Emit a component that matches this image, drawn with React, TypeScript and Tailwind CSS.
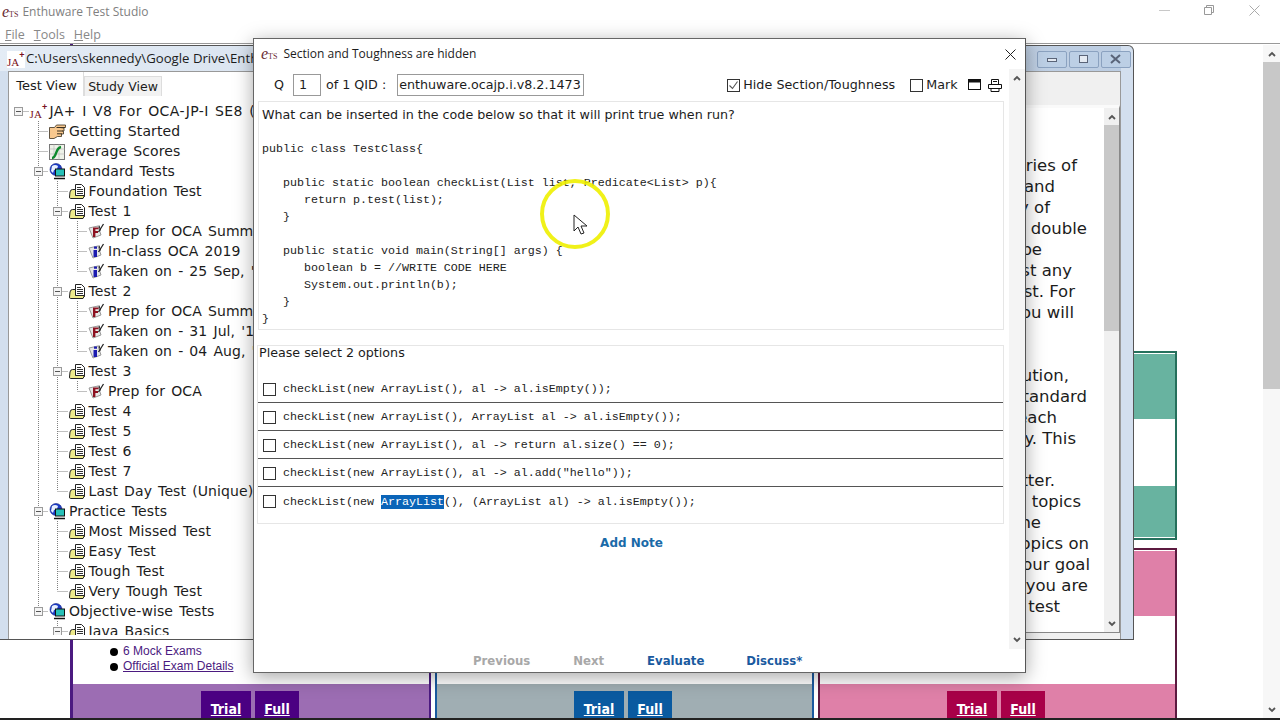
import React from "react";

const SANS = "font-['DejaVu_Sans',Verdana,sans-serif]";
const UI = "font-['Open_Sans','Noto_Sans',sans-serif]";
const MONO = "font-['Liberation_Mono','Courier_New',monospace]";

type Kind = "root" | "hand" | "chart" | "globe" | "folder" | "fail" | "info";
type Row = { d: number; label: string; icon: Kind; exp?: boolean };

const rows: Row[] = [
  { d: 0, label: "JA+ I V8 For OCA-JP-I SE8 (1Z0-808)", icon: "root", exp: true },
  { d: 1, label: "Getting Started", icon: "hand" },
  { d: 1, label: "Average Scores", icon: "chart" },
  { d: 1, label: "Standard Tests", icon: "globe", exp: true },
  { d: 2, label: "Foundation Test", icon: "folder" },
  { d: 2, label: "Test 1", icon: "folder", exp: true },
  { d: 3, label: "Prep for OCA Summer 2019", icon: "fail" },
  { d: 3, label: "In-class OCA 2019", icon: "info" },
  { d: 3, label: "Taken on - 25 Sep, '18", icon: "info" },
  { d: 2, label: "Test 2", icon: "folder", exp: true },
  { d: 3, label: "Prep for OCA Summer 2019", icon: "fail" },
  { d: 3, label: "Taken on - 31 Jul, '19", icon: "fail" },
  { d: 3, label: "Taken on - 04 Aug, '19", icon: "info" },
  { d: 2, label: "Test 3", icon: "folder", exp: true },
  { d: 3, label: "Prep for OCA", icon: "fail" },
  { d: 2, label: "Test 4", icon: "folder" },
  { d: 2, label: "Test 5", icon: "folder" },
  { d: 2, label: "Test 6", icon: "folder" },
  { d: 2, label: "Test 7", icon: "folder" },
  { d: 2, label: "Last Day Test (Unique)", icon: "folder" },
  { d: 1, label: "Practice Tests", icon: "globe", exp: true },
  { d: 2, label: "Most Missed Test", icon: "folder" },
  { d: 2, label: "Easy Test", icon: "folder" },
  { d: 2, label: "Tough Test", icon: "folder" },
  { d: 2, label: "Very Tough Test", icon: "folder" },
  { d: 1, label: "Objective-wise Tests", icon: "globe", exp: true },
  { d: 2, label: "Java Basics", icon: "folder", exp: true },
];

function laterAtDepth(i: number, depth: number) {
  for (let j = i + 1; j < rows.length; j++) {
    if (rows[j].d < depth) return false;
    if (rows[j].d === depth) return true;
  }
  return false;
}

function GuideCell({ vertical }: { vertical: boolean }) {
  return (
    <svg width="19.5" height="20" className="shrink-0">
      {vertical && <line x1="9.5" y1="0" x2="9.5" y2="20" stroke="#808080" strokeDasharray="1 1" />}
    </svg>
  );
}

function ConnectorCell({ d, more, exp }: { d: number; more: boolean; exp?: boolean }) {
  return (
    <svg width="19.5" height="20" className="shrink-0">
      {d > 0 && <line x1="9.5" y1="0" x2="9.5" y2={more ? 20 : 10} stroke="#808080" strokeDasharray="1 1" />}
      <line x1="9.5" y1="10.5" x2="20" y2="10.5" stroke="#808080" strokeDasharray="1 1" />
      {exp && (
        <g>
          <rect x="5.5" y="6.5" width="8" height="8" fill="#f4f4f4" stroke="#9a9a9a" />
          <line x1="7" y1="10.5" x2="12" y2="10.5" stroke="#555" />
        </g>
      )}
    </svg>
  );
}

function FolderIcon() {
  return (
    <svg width="17" height="17" viewBox="0 0 17 17" className="shrink-0">
      <path d="M6.500 1.500h6l3 3v9h-9z" fill="#fff" stroke="#222" />
      <path d="M8 4.500h4M8 6.500h6M8 8.500h6M8 10.500h6" stroke="#333" />
      <path d="M1.500 15.500Q.5 15.500.5 14l.5-5Q1.500 6.500 3.500 6.500H6.500V12.500H15.500L14 15.500Z" fill="#eeea8c" stroke="#222" />
    </svg>
  );
}

function ResultIcon({ fail }: { fail: boolean }) {
  return (
    <svg width="17" height="17" viewBox="0 0 17 17" className="shrink-0">
      <path d="M1 5l9-2 3 9-8 3z" fill="#e8e8e8" stroke="#999" />
      {fail ? (
        <path d="M5 4.500h5.500v1.800H7.400v1.800H10v1.800H7.400V14H5z" fill="#8c1020" />
      ) : (
        <path d="M6 3.500h3v2.200H6zM5.500 7h3.500v7H5.500z" fill="#1c1cb0" />
      )}
      <path d="M10.500 9l5-8" stroke="#222" strokeWidth="1.300" />
      <path d="M11 2.500l1.500 5" stroke="#222" />
    </svg>
  );
}

function TreeIcon({ kind }: { kind: Kind }) {
  if (kind === "folder") return <FolderIcon />;
  if (kind === "fail") return <ResultIcon fail />;
  if (kind === "info") return <ResultIcon fail={false} />;
  if (kind === "root") return <JaLogo />;
  if (kind === "hand")
    return (
      <svg width="17" height="17" viewBox="0 0 17 17" className="shrink-0">
        <path d="M.5 4.500h5l2-2.500h9v2.500H11l4 .5v3h-1.500l1 .5v2.500h-2v2.500H8.500L5 15.500H.5z" fill="#f8c88e" stroke="#3a3020" strokeWidth=".8" />
        <path d="M7.500 4.500h8.500M8 8h6M8 10.800h5" stroke="#3a3020" strokeWidth="1" />
      </svg>
    );
  if (kind === "chart")
    return (
      <svg width="17" height="17" viewBox="0 0 17 17" className="shrink-0">
        <rect x=".5" y="1.500" width="15" height="15" fill="#eef2e8" stroke="#777" />
        <path d="M.5 6h15M.5 11h15M5 1.500v15M10 1.500v15" stroke="#bbb" strokeWidth=".7" />
        <path d="M3 15c5 0 3-10 9-11" stroke="#0c8a2c" strokeWidth="2.400" fill="none" />
      </svg>
    );
  return (
    <svg width="17" height="17" viewBox="0 0 17 17" className="shrink-0">
      <circle cx="7" cy="6.500" r="6" fill="#1c3cc8" stroke="#102080" strokeWidth=".6" />
      <path d="M3 3q3-2 6 0l-1 3-3 1-1 3-2-2z" fill="#e8f0ff" />
      <rect x="6.500" y="6" width="9" height="7" fill="#27c0b8" stroke="#111" />
      <path d="M5 15.500h11" stroke="#111" strokeWidth="1.500" />
    </svg>
  );
}

function JaLogo() {
  return (
    <span className="w-[18px] h-[17px] shrink-0 flex items-start leading-none text-[#7a1020]">
      <span className="mt-[6px] text-[11px] font-['Liberation_Serif',serif]">JA</span>
      <span className="text-[9px] font-['Liberation_Sans',sans-serif] font-bold">+</span>
    </span>
  );
}

function EtsLogo() {
  return (
    <span className="text-[#6a2a32] font-['Liberation_Serif',serif] leading-none shrink-0 whitespace-nowrap block">
      <span className="italic text-[16px]">e</span>
      <span className="text-[8px]">TS</span>
    </span>
  );
}

function Tree() {
  return (
    <div className={`flex flex-col ${SANS} text-[14px] text-[#1c1c1c] tracking-[0.1px] [word-spacing:1.5px]`}>
      {rows.map((r, i) => {
        const guides: number[] = [];
        for (let k = 1; k < r.d; k++) guides.push(k);
        return (
          <div key={i} className="flex items-center h-[20px] whitespace-nowrap">
            {r.d > 0 && <GuideCell vertical={false} />}
            {guides.map((k) => (
              <GuideCell key={k} vertical={laterAtDepth(i, k)} />
            ))}
            <ConnectorCell d={r.d} more={laterAtDepth(i, r.d)} exp={r.exp} />
            <span className={`ml-px flex ${r.icon === "root" ? "mr-[2px]" : "mr-[3px]"}`}>
              <TreeIcon kind={r.icon} />
            </span>
            <span className={r.icon === "root" ? "tracking-[0.4px]" : ""}>{r.label}</span>
          </div>
        );
      })}
    </div>
  );
}

const Chevron = ({ up }: { up?: boolean }) => (
  <svg width="8" height="6" viewBox="0 0 8 6">
    <path d={up ? "M1 5l3-3 3 3" : "M1 1l3 3 3-3"} stroke="#555" strokeWidth="1.800" fill="none" />
  </svg>
);

const BTN = "flex justify-center items-end h-[27px] text-white font-bold underline text-[14px] font-['DejaVu_Sans_Condensed','DejaVu_Sans',sans-serif] leading-[17px]";

function PageCard({ band, line, trial, trialX, children }: { band: string; line: string; trial: string; trialX: string; children?: React.ReactNode }) {
  return (
    <div className={`flex flex-col justify-end h-full ${line}`}>
      {children}
      <div className={`h-[34px] flex ${band} ${trialX} gap-[4px] items-end mt-auto`}>
        <span className={`${BTN} w-[50px] ${trial}`}>Trial</span>
        <span className={`${BTN} w-[44px] ${trial}`}>Full</span>
      </div>
    </div>
  );
}

function BackPage() {
  return (
    <div className="absolute inset-x-0 top-0 bottom-0 flex pl-[70px]">
      <div className="w-[361px] h-full">
        <PageCard band="bg-[#9c6db3]" line="border-l-[3px] border-r-[2px] border-[#4b1a80]" trial="bg-[#4b0082]" trialX="pl-[128px]">
          <ul className="absolute top-[600px] left-[110px] text-[12px] leading-[15px] font-['Liberation_Sans',sans-serif] text-[#4b1a80]">
            <li className="flex items-center gap-[5px]"><span className="bg-black rounded-full w-[8px] h-[8px]" />6 Mock Exams</li>
            <li className="flex items-center gap-[5px]"><span className="bg-black rounded-full w-[8px] h-[8px]" /><span className="underline">Official Exam Details</span></li>
          </ul>
        </PageCard>
      </div>
      <div className="w-[3px]" />
      <div className="w-[379px] h-full ml-[1px]">
        <PageCard band="bg-[#a0aeb3]" line="border-l-[2px] border-r-[2px] border-[#1a5a9f]" trial="bg-[#0a5aa0]" trialX="pl-[137px]" />
      </div>
      <div className="w-[3px]" />
      <div className="w-[359px] h-full flex flex-col ml-[1px]">
        <div className="h-[307px]" />
        <div className="h-[189px] border-2 border-[#25705c] flex flex-col">
          <div className="flex-1 bg-[#68b3a0] border-t border-white" />
          <div className="h-[67px] bg-white" />
          <div className="h-[52px] bg-[#68b3a0] border-b border-white" />
        </div>
        <div className="h-[8px]" />
        <div className="flex-1 border-l-2 border-r-2 border-t-2 border-[#5c1a40] flex flex-col">
          <div className="h-[66px] bg-[#df80a8] border-t border-white" />
          <div className="flex-1 bg-white" />
          <div className="h-[34px] bg-[#df80a8] flex items-end pl-[127px] gap-[4px]">
            <span className={`${BTN} w-[50px] bg-[#a80048]`}>Trial</span>
            <span className={`${BTN} w-[44px] bg-[#a80048]`}>Full</span>
          </div>
        </div>
      </div>
    </div>
  );
}

const desc: { t: string; pr: string }[] = [
  { t: "series of", pr: "pr-[27px]" },
  { t: "and", pr: "pr-[49px]" },
  { t: "y of", pr: "pr-[54px]" },
  { t: "double", pr: "pr-[17px]" },
  { t: "be", pr: "pr-[62px]" },
  { t: "st any", pr: "pr-[32px]" },
  { t: "st. For", pr: "pr-[29px]" },
  { t: "you will", pr: "pr-[30px]" },
  { t: "\u00a0", pr: "pr-0" },
  { t: "\u00a0", pr: "pr-0" },
  { t: "ution,", pr: "pr-[35px]" },
  { t: "standard", pr: "pr-[17px]" },
  { t: "each", pr: "pr-[47px]" },
  { t: "y. This", pr: "pr-[28px]" },
  { t: "\u00a0", pr: "pr-0" },
  { t: "tter.", pr: "pr-[49px]" },
  { t: "topics", pr: "pr-[23px]" },
  { t: "he", pr: "pr-[63px]" },
  { t: "topics on", pr: "pr-[15px]" },
  { t: "your goal", pr: "pr-[14px]" },
  { t: "you are", pr: "pr-[16px]" },
  { t: "test", pr: "pr-[44px]" },
];

function InternalFrame() {
  return (
    <section className="absolute left-0 top-[1px] w-[1134px] h-[595px] bg-[#d3dfee] border-r border-b border-t border-[#555] rounded-tr-[6px] flex flex-col pl-[8px] pr-[12px]">
      <header className={`h-[25px] shrink-0 flex items-center -ml-[8px] pl-[7px] pt-[1px] ${UI} text-[13.200px] text-[#1c1c1c] whitespace-nowrap bg-gradient-to-r from-[#e4ecf5] to-[#bccde2]`}>
        <span className="mr-[1px] bg-white h-[17px] flex items-center"><JaLogo /></span>
        C:\Users\skennedy\Google Drive\Enthuware
        <span className="ml-auto flex gap-[2px] -mr-[10px]">
          {["min", "max", "close"].map((k) => (
            <span key={k} className="w-[30px] h-[17px] flex items-center justify-center border border-[#8ba2c0] rounded-[2px] bg-[#bccfe5]">
              <svg width="14" height="10" viewBox="0 0 14 10">
                {k === "min" && <rect x="2.500" y="4.500" width="9" height="3" fill="#e4eaf2" stroke="#5a6478" />}
                {k === "max" && <rect x="2.500" y="1.500" width="8" height="7" fill="#e4eaf2" stroke="#5a6478" />}
                {k === "close" && <path d="M2 1l9 8M11 1l-9 8" stroke="#5a6478" strokeWidth="2" />}
              </svg>
            </span>
          ))}
        </span>
      </header>
      <div className="flex-1 min-h-0 flex bg-white border border-[#999] border-b-0">
        <div className="w-[244px] flex flex-col min-h-0 shrink-0">
          <div className={`h-[24px] flex items-end shrink-0 ${SANS} text-[13px] text-[#1c1c1c]`}>
            <span className="w-[75px] h-[24px] pt-[3px] pl-[1px] flex items-center justify-center border-r border-[#ddd] whitespace-nowrap">Test View</span>
            <span className="w-[78px] h-[20px] pt-[1px] flex items-center justify-center bg-[#f2f2f2] border border-b-0 border-[#ddd] whitespace-nowrap text-[12.500px]">Study View</span>
          </div>
          <div className="flex-1 min-h-0 overflow-hidden pt-[5px] mb-[4px]">
            <Tree />
          </div>
        </div>
        <div className="flex-1 min-w-0 flex flex-col bg-[#f0f0f0] overflow-hidden">
          <div className="h-[33px] shrink-0" />
          <div className="flex-1 min-h-0 mb-[6px] flex bg-white border-t-[3px] border-[#fafafa] border-b border-r border-b-[#888] border-r-[#888]">
            <div className={`flex-1 min-w-0 pt-[47px] ${SANS} text-[16.500px] leading-[21px] text-[#1c1c1c] text-right whitespace-nowrap overflow-hidden`}>
              {desc.map((l, i) => (
                <div key={i} className={l.pr}>{l.t}</div>
              ))}
            </div>
            <div className="w-[15px] flex flex-col shrink-0 bg-[#f0f0f0]">
              <div className="h-[17px] flex items-center justify-center"><Chevron up /></div>
              <div className="h-[206px] bg-[#c8c8c8]" />
              <div className="flex-1" />
              <div className="h-[17px] flex items-center justify-center"><Chevron /></div>
            </div>
          </div>
        </div>
      </div>
    </section>
  );
}

const Check = ({ checked }: { checked?: boolean }) => (
  <span className="w-[13px] h-[13px] border border-[#333] bg-white flex items-center justify-center shrink-0">
    {checked && (
      <svg width="11" height="11" viewBox="0 0 11 11">
        <path d="M1.500 5.500l3 3 5-7" stroke="#555" strokeWidth="1.100" fill="none" />
      </svg>
    )}
  </span>
);

const code = `public class TestClass{

   public static boolean checkList(List list, Predicate<List> p){
      return p.test(list);
   }

   public static void main(String[] args) {
      boolean b = //WRITE CODE HERE
      System.out.println(b);
   }
}`;

const options: React.ReactNode[] = [
  "checkList(new ArrayList(), al -> al.isEmpty());",
  "checkList(new ArrayList(), ArrayList al -> al.isEmpty());",
  "checkList(new ArrayList(), al -> return al.size() == 0);",
  'checkList(new ArrayList(), al -> al.add("hello"));',
  <>checkList(new <span className="bg-[#0a64b8] text-white">ArrayList</span>(), (ArrayList al) -&gt; al.isEmpty());</>,
];

const NAV = "font-['DejaVu_Sans_Condensed','DejaVu_Sans',sans-serif] font-bold text-[13px]";

function Dialog() {
  return (
    <section className="absolute left-[253px] top-[-6px] w-[773px] h-[635px] bg-white border border-[#666] border-r-[#555] shadow-[0_4px_18px_rgba(0,0,0,0.35)] flex flex-col">
      <header className={`h-[30px] shrink-0 flex items-center pl-[7px] pr-[9px] text-[12px] ${UI} text-[#1c1c1c]`}>
        <EtsLogo />
        <span className="ml-[6px]">Section and Toughness are hidden</span>
        <svg className="ml-auto" width="11" height="11" viewBox="0 0 11 11">
          <path d="M.5.500l10 10M10.500.500l-10 10" stroke="#222" />
        </svg>
      </header>
      <div className="flex-1 min-h-0 flex">
        <div className={`flex-1 min-w-0 flex flex-col ${SANS} text-[#1c1c1c] text-[12.700px]`}>
          <div className="h-[32px] shrink-0 flex items-center whitespace-nowrap">
            <span className="ml-[20px]">Q</span>
            <span className="ml-[9px] w-[28px] h-[22px] border border-[#999] flex items-center pl-[5px]">1</span>
            <span className="ml-[5px]">of 1 QID :</span>
            <span className="ml-[11px] w-[187px] h-[22px] border border-[#999] flex items-center pl-[1px] overflow-hidden">enthuware.ocajp.i.v8.2.1473</span>
            <span className="ml-[143px]"><Check checked /></span>
            <span className="ml-[3px] tracking-[0.05px]">Hide Section/Toughness</span>
            <span className="ml-[15px]"><Check /></span>
            <span className="ml-[3px]">Mark</span>
            <svg className="ml-[10px] shrink-0" width="13" height="12" viewBox="0 0 13 12">
              <rect x=".5" y=".5" width="12" height="10" fill="#fff" stroke="#111" />
              <rect x=".5" y=".5" width="12" height="3" fill="#111" />
            </svg>
            <svg className="ml-[7px] shrink-0" width="14" height="13" viewBox="0 0 14 13">
              <path d="M3.500.5h7v5h-7zM.5 5.500h13v4H.5zM3 9.500h8v3H3z" fill="#fff" stroke="#111" />
              <path d="M5 2.500h4" stroke="#111" />
            </svg>
          </div>
          <div className="ml-[4px] mr-[5px] h-[229px] shrink-0 border border-[#e6e6e6] pl-[3px] pt-[4px]">
            <p className="leading-[18px] whitespace-nowrap">What can be inserted in the code below so that it will print true when run?</p>
            <pre className={`${MONO} text-[11.670px] leading-[17px] mt-[17px] text-[#222]`}>{code}</pre>
          </div>
          <div className="mt-[15px] ml-[3px] mr-[5px] h-[179px] shrink-0 border border-[#e6e6e6] flex flex-col">
            <p className="pl-[1px] h-[29px] leading-[14px] shrink-0">Please select 2 options</p>
            {options.map((o, i) => (
              <div key={i} className={`h-[28px] shrink-0 flex items-center pl-[5px] ${i < 4 ? "border-b border-[#555]" : ""} ${MONO} text-[11.670px] whitespace-pre text-[#222]`}>
                <span className="mt-[1px]"><Check /></span>
                <span className="ml-[7px] mt-[3px]">{o}</span>
              </div>
            ))}
          </div>
          <div className="mt-[10px] h-[17px] text-center font-bold text-[12px] text-[#1a6aa8] whitespace-nowrap">Add Note</div>
          <div className="mt-auto h-[26px] mb-[-2px] flex items-center whitespace-nowrap">
            <span className={`${NAV} ml-[219px] text-[#a8a8a8]`}>Previous</span>
            <span className={`${NAV} ml-[43px] text-[#a8a8a8]`}>Next</span>
            <span className={`${NAV} ml-[43px] text-[#1a5a9f]`}>Evaluate</span>
            <span className={`${NAV} ml-[42px] text-[#1a5a9f]`}>Discuss*</span>
          </div>
        </div>
        <div className="w-[16px] shrink-0 h-[580px] bg-[#f4f4f4] flex flex-col justify-between py-[6px] items-center">
          <Chevron up />
          <Chevron />
        </div>
      </div>
    </section>
  );
}

export default function App() {
  return (
    <div className={`w-[1280px] h-[720px] bg-white overflow-hidden flex flex-col border-b-2 border-[#222] ${SANS}`}>
      <div className={`h-[23px] shrink-0 flex items-center pl-[2px] text-[12px] ${UI} text-[#808080] whitespace-nowrap`}>
        <EtsLogo />
        <span className="ml-[4px]">Enthuware Test Studio</span>
        <span className="ml-auto flex items-center gap-[34px] pr-[20px] mb-[3px]">
          <svg width="11" height="11" viewBox="0 0 11 11"><path d="M0 5.500h11" stroke="#c8c8c8" /></svg>
          <svg width="11" height="11" viewBox="0 0 11 11"><path d="M.5 2.500h7v7h-7zM2.500 2.500v-2h7v7h-2" stroke="#999" fill="none" /></svg>
          <svg width="11" height="11" viewBox="0 0 11 11"><path d="M.5.500l10 10M10.500.500l-10 10" stroke="#aaa" fill="none" /></svg>
        </span>
      </div>
      <nav className={`h-[20px] shrink-0 flex items-center gap-[9px] pl-[5px] pt-[4px] text-[12.500px] ${UI} text-[#888]`}>
        <span><span className="underline">F</span>ile</span>
        <span><span className="underline">T</span>ools</span>
        <span><span className="underline">H</span>elp</span>
      </nav>
      <div className="flex-1 min-h-0 relative border-t border-[#999]">
        <BackPage />
        <div className="absolute right-0 top-[1px] bottom-0 w-[17px] flex flex-col bg-[#f7f7f7]">
          <div className="h-[17px] flex items-center justify-center"><Chevron up /></div>
          <div className="h-[327px] bg-[#c8c8c8]" />
          <div className="flex-1" />
          <div className="h-[17px] flex items-center justify-center"><Chevron /></div>
        </div>
        <InternalFrame />
        <Dialog />
        <svg className="absolute left-[535px] top-[127px]" width="80" height="90" viewBox="0 0 80 90">
          <circle cx="40" cy="43" r="33" fill="none" stroke="#eef000" strokeWidth="4" opacity=".9" />
          <path d="M39 44v16l4-4 3 7 3-1-3-7h6z" fill="#fff" stroke="#222" />
        </svg>
      </div>
    </div>
  );
}
